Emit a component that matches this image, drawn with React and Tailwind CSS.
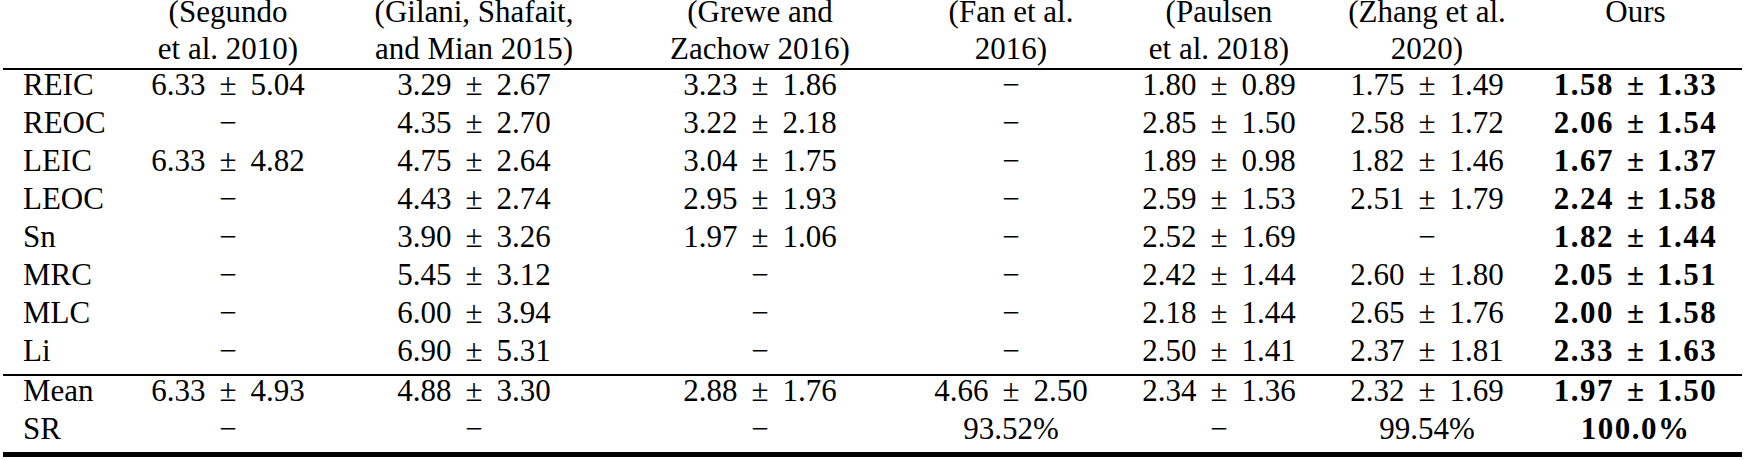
import React from "react";

const COLS = "grid grid-cols-[116px_218px_274px_298px_204px_212px_204px_213px]";

const headers = [
  ["(Segundo", "et al. 2010)"],
  ["(Gilani, Shafait,", "and Mian 2015)"],
  ["(Grewe and", "Zachow 2016)"],
  ["(Fan et al.", "2016)"],
  ["(Paulsen", "et al. 2018)"],
  ["(Zhang et al.", "2020)"],
  ["Ours", ""],
];

const rows = [
  ["REIC", ["6.33", "5.04"], ["3.29", "2.67"], ["3.23", "1.86"], null, ["1.80", "0.89"], ["1.75", "1.49"], ["1.58", "1.33"]],
  ["REOC", null, ["4.35", "2.70"], ["3.22", "2.18"], null, ["2.85", "1.50"], ["2.58", "1.72"], ["2.06", "1.54"]],
  ["LEIC", ["6.33", "4.82"], ["4.75", "2.64"], ["3.04", "1.75"], null, ["1.89", "0.98"], ["1.82", "1.46"], ["1.67", "1.37"]],
  ["LEOC", null, ["4.43", "2.74"], ["2.95", "1.93"], null, ["2.59", "1.53"], ["2.51", "1.79"], ["2.24", "1.58"]],
  ["Sn", null, ["3.90", "3.26"], ["1.97", "1.06"], null, ["2.52", "1.69"], null, ["1.82", "1.44"]],
  ["MRC", null, ["5.45", "3.12"], null, null, ["2.42", "1.44"], ["2.60", "1.80"], ["2.05", "1.51"]],
  ["MLC", null, ["6.00", "3.94"], null, null, ["2.18", "1.44"], ["2.65", "1.76"], ["2.00", "1.58"]],
  ["Li", null, ["6.90", "5.31"], null, null, ["2.50", "1.41"], ["2.37", "1.81"], ["2.33", "1.63"]],
];

const summary = [
  ["Mean", ["6.33", "4.93"], ["4.88", "3.30"], ["2.88", "1.76"], ["4.66", "2.50"], ["2.34", "1.36"], ["2.32", "1.69"], ["1.97", "1.50"]],
  ["SR", null, null, null, "93.52%", null, "99.54%", "100.0%"],
];

function Cell({ v, bold }) {
  if (v === null) {
    return <span>−</span>;
  }
  if (typeof v === "string") {
    return bold ? <span className="font-bold tracking-[1.5px]">{v}</span> : <span>{v}</span>;
  }
  if (bold) {
    return (
      <span className="font-bold whitespace-nowrap">
        <span className="tracking-[1.5px]">{v[0]}</span>
        <span className="mx-[13px]">±</span>
        <span className="tracking-[1.5px]">{v[1]}</span>
      </span>
    );
  }
  return (
    <span className="whitespace-nowrap">
      {v[0]}
      <span className="mx-[14px]">±</span>
      {v[1]}
    </span>
  );
}

function Row({ r }) {
  return (
    <div className={`${COLS} leading-[29px] pb-[9px]`}>
      <div className="pl-[20px] text-left">{r[0]}</div>
      {r.slice(1).map((v, i) => (
        <div key={i} className="text-center">
          <Cell v={v} bold={i === 6} />
        </div>
      ))}
    </div>
  );
}

export default function App() {
  return (
    <div className="w-[1746px] h-[460px] overflow-hidden bg-white text-black pl-[3px] pr-[4px] font-serif text-[31px]">
      <div className="font-[Liberation_Serif]">
        <div className="h-[68px] overflow-hidden flex flex-col justify-end">
          <div className={`${COLS} shrink-0 mb-[1px] leading-[37px]`}>
            <div></div>
            {headers.map((h, i) => (
              <div key={i} className="text-center flex flex-col whitespace-nowrap">
                <span>{h[0]}</span>
                <span>{h[1] || "\u00a0"}</span>
              </div>
            ))}
          </div>
        </div>
        <div className="h-[2px] bg-black"></div>
        {rows.map((r, i) => (
          <Row key={i} r={r} />
        ))}
        <div className="h-[2px] bg-black"></div>
        {summary.map((r, i) => (
          <Row key={i} r={r} />
        ))}
        <div className="h-[5px] bg-black"></div>
      </div>
    </div>
  );
}
